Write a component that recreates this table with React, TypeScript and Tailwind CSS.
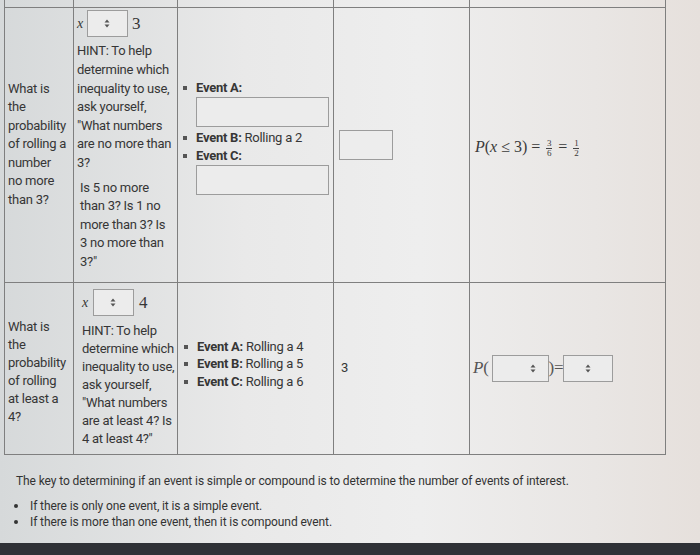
import React from "react";

function Spinner() {
  return (
    <svg width="6" height="9" viewBox="0 0 6 9" className="text-[#555]">
      <path d="M3 0.5 L5.5 3.5 L0.5 3.5 Z" fill="currentColor" />
      <path d="M3 8.5 L5.5 5.5 L0.5 5.5 Z" fill="currentColor" />
    </svg>
  );
}

function SelectBox({ w, center }: { w: string; center?: boolean }) {
  return (
    <span
      className={`inline-flex h-[27px] items-center border border-[#9c9c9c] bg-[#ececec] align-middle ${w} ${
        center ? "justify-center" : "justify-end pr-[12px]"
      }`}
    >
      <Spinner />
    </span>
  );
}

function Frac({ n, d }: { n: string; d: string }) {
  return (
    <span className="inline-flex flex-col items-center align-middle mx-[2px] text-[9px] leading-[9px]">
      <span>{n}</span>
      <span className="h-px w-[6px] bg-[#444]" />
      <span>{d}</span>
    </span>
  );
}

function Bullet({ children }: { children: React.ReactNode }) {
  return (
    <li className="flex items-start gap-[9px]">
      <span className="mt-[7px] h-[4px] w-[4px] shrink-0 bg-[#555]" />
      <span>{children}</span>
    </li>
  );
}

export default function App() {
  const cell = "border border-[#7f7f7f] align-middle whitespace-nowrap";
  return (
    <div className="flex h-[555px] w-[700px] flex-col overflow-hidden bg-[linear-gradient(90deg,#d6d9da,#e9e9e9_35%,#eeeeee_60%,#e9e6e4_85%,#e6e0dc)] font-['Roboto',sans-serif] text-[13px] tracking-[-0.25px] text-[#363636]">
      <div className="flex-1 pl-[4px]">
        <table className="w-[661px] table-fixed border-collapse">
          <colgroup>
            <col className="w-[69px]" />
            <col className="w-[104px]" />
            <col className="w-[156px]" />
            <col className="w-[136px]" />
            <col className="w-[196px]" />
          </colgroup>
          <tbody>
            <tr className="h-[7px]">
              <td className="border-x border-b border-[#7f7f7f]" />
              <td className="border-x border-b border-[#7f7f7f]" />
              <td className="border-x border-b border-[#7f7f7f]" />
              <td className="border-x border-b border-[#7f7f7f]" />
              <td className="border-x border-b border-[#7f7f7f]" />
            </tr>
            <tr className="h-[275px]">
              <td className={`${cell} px-[3px] leading-[18.4px]`}>
                What is
                <br />
                the
                <br />
                probability
                <br />
                of rolling a
                <br />
                number
                <br />
                no more
                <br />
                than 3?
              </td>
              <td className={`${cell} px-[3px] pb-[8px] leading-[18.6px]`}>
                <div className="flex items-center gap-[4px] pt-[1px]">
                  <span className="font-['Liberation_Serif',serif] text-[14px] italic">x</span>
                  <SelectBox w="w-[41px]" center />
                  <span className="font-['Liberation_Serif',serif] text-[17px]">3</span>
                </div>
                <p className="mt-[5px]">
                  HINT: To help
                  <br />
                  determine which
                  <br />
                  inequality to use,
                  <br />
                  ask yourself,
                  <br />
                  "What numbers
                  <br />
                  are no more than
                  <br />
                  3?
                </p>
                <p className="mt-[6px] pl-[3px]">
                  Is 5 no more
                  <br />
                  than 3? Is 1 no
                  <br />
                  more than 3? Is
                  <br />
                  3 no more than
                  <br />
                  3?"
                </p>
              </td>
              <td className={`${cell} pl-[5px] pr-[4px] pb-[16px]`}>
                <ul className="leading-[18px]">
                  <Bullet>
                    <b className="font-bold">Event A:</b>
                  </Bullet>
                  <div className="ml-[13px] mb-[2px] h-[30px] border border-[#9c9c9c] bg-[#ececec]" />
                  <Bullet>
                    <b className="font-bold">Event B:</b> Rolling a 2
                  </Bullet>
                  <Bullet>
                    <b className="font-bold">Event C:</b>
                  </Bullet>
                  <div className="ml-[13px] h-[30px] border border-[#9c9c9c] bg-[#ececec]" />
                </ul>
              </td>
              <td className={`${cell} px-[5px]`}>
                <div className="h-[30px] w-[54px] border border-[#9c9c9c] bg-[#ededed]" />
              </td>
              <td className={`${cell} px-[5px] pt-[5px]`}>
                <span className="font-['Liberation_Serif',serif] text-[16px] tracking-normal text-[#3a3a3a]">
                  <i>P</i>(<i>x</i> ≤ 3) = <Frac n="3" d="6" /> = <Frac n="1" d="2" />
                </span>
              </td>
            </tr>
            <tr className="h-[172px]">
              <td className={`${cell} px-[3px] pt-[8px] leading-[18px]`}>
                What is
                <br />
                the
                <br />
                probability
                <br />
                of rolling
                <br />
                at least a
                <br />
                4?
              </td>
              <td className={`${cell} pl-[8px] pr-0 leading-[18px]`}>
                <div className="flex items-center gap-[5px] pt-[1px]">
                  <span className="font-['Liberation_Serif',serif] text-[14px] italic">x</span>
                  <SelectBox w="w-[41px]" center />
                  <span className="font-['Liberation_Serif',serif] text-[17px]">4</span>
                </div>
                <p className="mt-[6px]">
                  HINT: To help
                  <br />
                  determine which
                  <br />
                  inequality to use,
                  <br />
                  ask yourself,
                  <br />
                  "What numbers
                  <br />
                  are at least 4? Is
                  <br />
                  4 at least 4?"
                </p>
              </td>
              <td className={`${cell} pl-[6px] pr-[4px] pb-[8px]`}>
                <ul className="leading-[17.5px]">
                  <Bullet>
                    <b className="font-bold">Event A:</b> Rolling a 4
                  </Bullet>
                  <Bullet>
                    <b className="font-bold">Event B:</b> Rolling a 5
                  </Bullet>
                  <Bullet>
                    <b className="font-bold">Event C:</b> Rolling a 6
                  </Bullet>
                </ul>
              </td>
              <td className={`${cell} px-[7px]`}>3</td>
              <td className={`${cell} px-[3px]`}>
                <div className="flex items-center font-['Liberation_Serif',serif] text-[17px] text-[#555]">
                  <i>P</i>
                  <span>(</span>
                  <span className="ml-[3px]">
                    <SelectBox w="w-[57px]" />
                  </span>
                  <span>)=</span>
                  <SelectBox w="w-[50px]" center />
                </div>
              </td>
            </tr>
          </tbody>
        </table>
        <div className="pl-[10px] pt-[18px] text-[12px] leading-[16px] tracking-[-0.1px] text-[#333]">
          <p className="pl-[2px]">
            The key to determining if an event is simple or compound is to determine the number of events of interest.
          </p>
          <ul className="mt-[9px]">
            <li className="flex items-center gap-[12px]">
              <span className="h-[4px] w-[4px] rounded-full bg-[#333]" />
              If there is only one event, it is a simple event.
            </li>
            <li className="flex items-center gap-[12px]">
              <span className="h-[4px] w-[4px] rounded-full bg-[#333]" />
              If there is more than one event, then it is compound event.
            </li>
          </ul>
        </div>
      </div>
      <div className="h-[12px] bg-[#2f3136]" />
    </div>
  );
}
